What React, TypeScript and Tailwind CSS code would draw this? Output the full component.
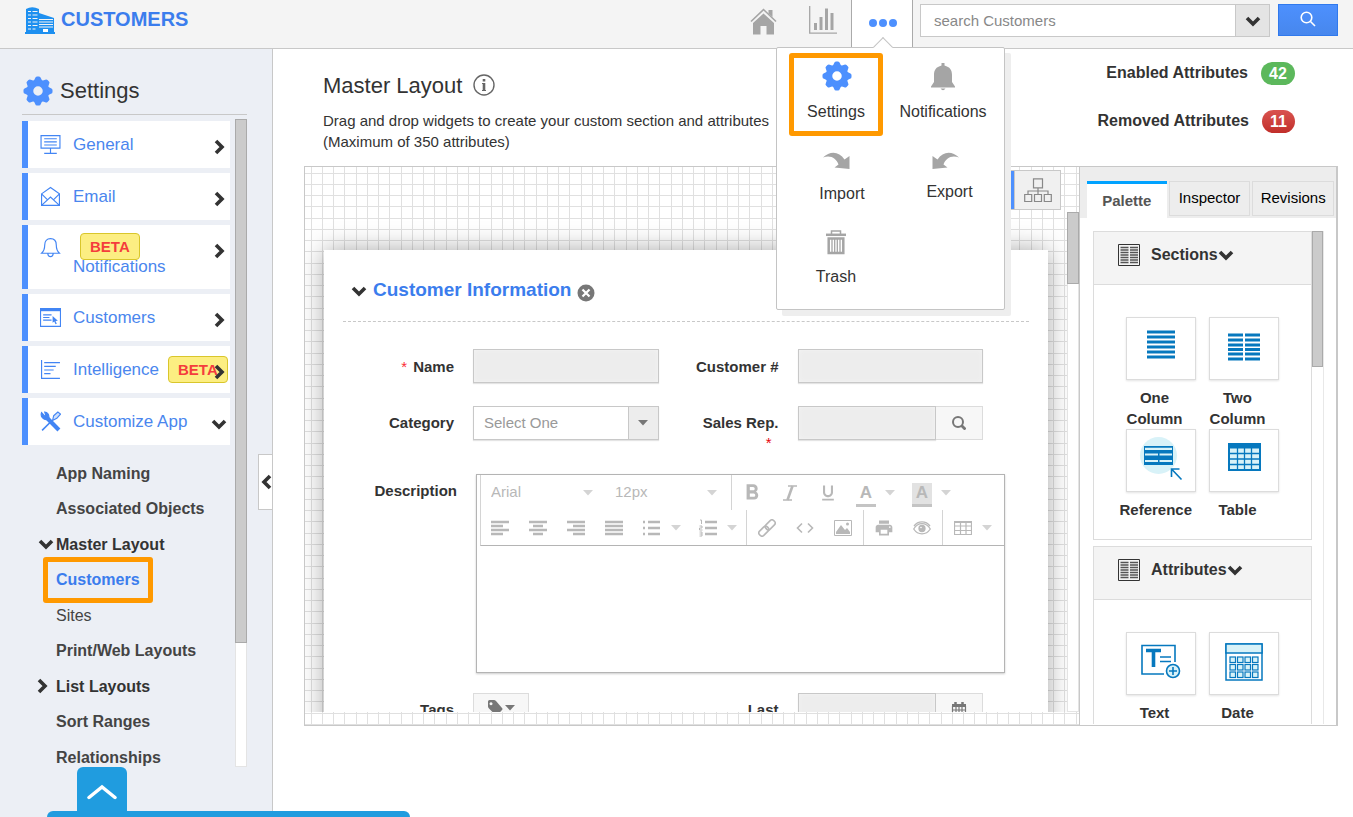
import type { ReactNode } from "react";
import { MdFormatBold, MdFormatUnderlined, MdPrint } from "react-icons/md";

function Chevron({ className = "" }: { className?: string }) {
  return (
    <svg viewBox="0 0 16 16" className={"w-4 h-4 shrink-0 " + className} fill="none" stroke="#333" strokeWidth="3.6">
      <path d="M2 5l6 6 6-6" />
    </svg>
  );
}

function Caret({ className = "" }: { className?: string }) {
  return (
    <svg viewBox="0 0 10 6" className={"w-[10px] h-[6px] pointer-events-none " + className} fill="currentColor">
      <path d="M0 0h10L5 5.500z" />
    </svg>
  );
}

function Gear() {
  return (
    <svg viewBox="-15 -15 30 30" className="w-[30px] h-[30px] shrink-0" fill="#4d90fe">
      <circle r="8" fill="none" stroke="#4d90fe" strokeWidth="6.500" />
      {[0, 45, 90, 135, 180, 225, 270, 315].map((angle) => (
        <path key={angle} d="M-4.500-9.500L-2.800-13Q-2.400-14.500-1-14.500H1Q2.400-14.500 2.800-13L4.500-9.500z" transform={`rotate(${angle})`} />
      ))}
    </svg>
  );
}

function Building() {
  return (
    <svg viewBox="0 0 30 27" className="w-[30px] h-[27px]" fill="#1e90f0">
      <path d="M0 25h30v2H0zM1 2q6-3.500 13 0v24H1z" />
      <path d="M14 6l15 5v15H14z" />
      <path d="M3 4.500h3M7.500 4.500h5M3 8h3M7.500 8h5M3 11.500h3M7.500 11.500h5M3 15h3M7.500 15h5M3 18.500h3M7.500 18.500h5M3 22h3M7.500 22h3" stroke="#f4f4f4" strokeWidth="1.200" />
      <path d="M14 12.500h14M14 15h14M14 17.500h14M14 20h14" stroke="#f4f4f4" strokeWidth="1.100" />
      <path d="M18 22h5v3h-5z" fill="#fff" />
    </svg>
  );
}

const menuIcons: Record<string, ReactNode> = {
  general: <path d="M1 1.500h18v12H1zM4 4.500h12M4 7.500h12M4 10.500h12M10 14v4M4 18.500h12" />,
  email: <path d="M1.500 7.500L10 1.500l8.500 6v11h-17zM1.500 7.500L7 13M18.500 7.500L13 13M1.500 18.500l8.500-8 8.500 8" />,
  bell: <path d="M1.500 15.500C4 13 4.500 11 4.500 7.500C4.500 4 6.500 1.500 10 1.500s5.500 2.500 5.500 6c0 3.500.5 5.500 3 8zM7.500 16c0 3.500 5 3.500 5 0" />,
  customers: (
    <>
      <path d="M.5 1.500h19v17H.5z" />
      <path d="M.5 2.500h19" strokeWidth="3" />
      <path d="M3 7.500h8M3 10h6M3 12.500h8" />
      <path d="M12 8.500l5 4.500-2.200.3 1.200 2.700-1.200.5-1.200-2.800-1.600 1.300z" fill="#4285f4" stroke="none" />
    </>
  ),
  chart: <path d="M1.500 1v17.500H19M4 3.500h15M4 7h11M4 10.500h9M4 14h6" />,
  tools: (
    <>
      <path d="M7 7l11 11" strokeWidth="4" />
      <path d="M1.500 1.500c-1.500 4 2 7.500 6 6.500l1-2C8.500 3 7 1 4.500 1L5.500 4 4.500 5z" fill="#4285f4" />
      <path d="M2 18.500l9-9" strokeWidth="1.500" />
      <path d="M13 4.500L17 1l2.500 2L16 7l-4 2z" fill="#cfe0fc" />
    </>
  ),
};

const menu = [
  { icon: "general", label: "General" },
  { icon: "email", label: "Email" },
  { icon: "bell", label: "Notifications", beta: "above" },
  { icon: "customers", label: "Customers" },
  { icon: "chart", label: "Intelligence", beta: "after" },
  { icon: "tools", label: "Customize App", open: true },
];

const subMenu = [
  { label: "App Naming" },
  { label: "Associated Objects" },
  { label: "Master Layout", tree: "open" },
  { label: "Customers", active: true },
  { label: "Sites", light: true },
  { label: "Print/Web Layouts" },
  { label: "List Layouts", tree: "closed" },
  { label: "Sort Ranges" },
  { label: "Relationships" },
];

function Beta() {
  return (
    <span className="inline-block h-[27px] rounded border border-[#d9c62b] bg-[#fcee82] px-[9px] text-[15px] leading-[25px] font-bold text-[#f43d3d]">
      BETA
    </span>
  );
}

function Sidebar() {
  return (
    <aside className="relative w-[273px] shrink-0 border-r border-[#c8c8c8] bg-[#eceff5] pt-5 pl-[22px] pr-[25px]">
      <h2 className="flex h-[46px] items-center gap-[7px] border-b border-[#c8c8c8] pl-px pb-[2px] text-[22px] text-[#333]">
        <Gear />
        Settings
      </h2>
      <div className="mt-1 flex h-[648px] gap-[5px]">
        <nav className="w-[208px] overflow-hidden pt-[2px]">
          <ul className="flex flex-col gap-[5px]">
            {menu.map((item) => (
              <li key={item.label}>
                <a
                  href="#"
                  className={
                    "relative flex border-l-6 border-[#4d90fe] bg-white pl-3 text-[17px] text-[#4a86ee] " +
                    (item.beta === "above" ? "h-[64px] items-start pt-2" : "h-[47px] items-center")
                  }
                >
                  <svg
                    viewBox="0 0 20 20"
                    className={"mr-3 h-[21px] w-[21px] shrink-0 " + (item.beta === "above" ? "mt-1" : "")}
                    fill="none"
                    stroke="#4285f4"
                    strokeWidth="1.100"
                  >
                    {menuIcons[item.icon]}
                  </svg>
                  {item.beta === "above" ? (
                    <span className="flex flex-col">
                      <span className="ml-[7px] h-[26px]">
                        <Beta />
                      </span>
                      <span className="leading-4">{item.label}</span>
                    </span>
                  ) : (
                    item.label
                  )}
                  {item.beta === "after" && (
                    <span className="ml-[9px] flex">
                      <Beta />
                    </span>
                  )}
                  <Chevron className={"absolute top-[18px] right-[3px] " + (item.open ? "" : "-rotate-90")} />
                </a>
              </li>
            ))}
          </ul>
          <ul className="mt-[11px] pl-[34px] text-base font-bold text-[#444]">
            {subMenu.map((item) => (
              <li key={item.label} className="flex h-[35px] items-center even:h-9">
                <a
                  href="#"
                  className={
                    "relative " + (item.active ? "text-[#3b7ded]" : item.light ? "font-normal" : item.tree ? "text-[#333]" : "")
                  }
                >
                  {item.tree && (
                    <Chevron className={"absolute " + (item.tree === "open" ? "top-[3px] -left-[18px]" : "top-[3px] -left-[22px] -rotate-90")} />
                  )}
                  {item.label}
                  {item.active && (
                    <span className="absolute -inset-x-[13px] -inset-y-[11px] rounded-[3px] border-5 border-[#ff9900]" />
                  )}
                </a>
              </li>
            ))}
          </ul>
        </nav>
        <div className="w-3 border border-[#e4e4e4] bg-white">
          <div className="-mx-px -mt-px h-[524px] border border-[#aaa] bg-[#cbcbcb]" />
        </div>
      </div>
      <button
        aria-label="Collapse sidebar"
        className="absolute top-[405px] right-0 flex h-14 w-[14px] items-center border border-r-0 border-[#c8c8c8] bg-white"
      >
        <Chevron className="rotate-90" />
      </button>
    </aside>
  );
}

function ArrowIcon({ flip }: { flip?: boolean }) {
  return (
    <svg viewBox="0 0 27 18" className={"h-[18px] w-[27px] " + (flip ? "-scale-x-100" : "")} fill="#a5a5a5">
      <path d="M0 5.500C7-1.500 16-1 21.500 7.500L26.500 4v13L11.500 15.500l4-3C13.500 6 7 2.500 0 5.500z" />
    </svg>
  );
}

function MoreMenu() {
  return (
    <div className="absolute top-[47px] -left-[76px] z-20 h-[263px] w-[229px] rounded-[2px] border border-[#c4c4c4] bg-white shadow-[6px_6px_0_#eeeeee]">
      <span className="absolute -top-[8px] left-[99px] h-[14px] w-[14px] rotate-45 border-t border-l border-[#c4c4c4] bg-white" />
      <ul className="relative grid grid-cols-[94px_94px] gap-x-[13px] pt-[5px] pl-3 text-base text-[#333]">
        <li className="h-[99px]">
          <a href="#" className="flex h-[83px] flex-col items-center gap-[11px] rounded-[3px] border-5 border-[#ff9900] pt-[3px]">
            <span className="pl-[2px]">
              <Gear />
            </span>
            <span className="leading-5">Settings</span>
          </a>
        </li>
        <li>
          <a href="#" className="flex flex-col items-center gap-[11px] pt-[10px]">
            <svg viewBox="0 0 24 28" className="h-7 w-6" fill="#a5a5a5">
              <path d="M10.500 0h3v2.500C19 4 21 7 21 12v7l3 4.500v1H0v-1L3 19v-7C3 7 5 4 10.500 2.500zM9.500 25.500h5q-2.500 3.500-5 0z" />
            </svg>
            <span className="leading-5">Notifications</span>
          </a>
        </li>
        <li className="h-[78px]">
          <a href="#" className="flex flex-col items-center gap-[14px]">
            <ArrowIcon />
            <span className="pl-3 leading-5">Import</span>
          </a>
        </li>
        <li>
          <a href="#" className="flex flex-col items-center gap-3 pl-[5px]">
            <ArrowIcon flip />
            <span className="pl-2 leading-5">Export</span>
          </a>
        </li>
        <li>
          <a href="#" className="flex flex-col items-center gap-3">
            <svg viewBox="0 0 20 25" className="h-[25px] w-5" fill="none" stroke="#a5a5a5">
              <path d="M5.500 4V1h9v3" strokeWidth="1.500" />
              <path d="M0 4.800h20" strokeWidth="2.500" />
              <path d="M2.700 8.500h14.600v14.500H2.700z" strokeWidth="2.500" />
              <path d="M6 9v14M8.700 9v14M11.300 9v14M14 9v14" strokeWidth="1.300" />
            </svg>
            <span className="leading-5">Trash</span>
          </a>
        </li>
      </ul>
    </div>
  );
}

function Header() {
  return (
    <header className="flex h-[49px] justify-between border-b border-[#c8c8c8] bg-[#f4f4f4] pr-[15px] pl-[25px]">
      <h1 className="flex h-[40px] items-center gap-[6px] text-xl font-bold text-[#3b7ded]">
        <Building />
        <span className="-mt-[2px]">CUSTOMERS</span>
      </h1>
      <div className="flex">
        <button aria-label="Home" className="mt-2 mr-8 h-[27px]">
          <svg viewBox="0 0 27 27" className="h-[27px] w-[27px]" fill="#a5a5a5">
            <path d="M13.500 5.500L24 15v11.500h-7.500V18h-6v8.500H3V15z" />
            <path d="M1 13.500L13.500 1.500 26 13.500" fill="none" stroke="#a5a5a5" strokeWidth="1.600" />
            <path d="M18.500 2h4v7l-4-3.500z" />
          </svg>
        </button>
        <button aria-label="Reports" className="mt-[6px] mr-[14px] h-[28px]">
          <svg viewBox="0 0 28 28" className="h-7 w-7" fill="none" stroke="#a5a5a5">
            <path d="M.7 0v27.200H28" strokeWidth="1.300" />
            <path d="M6.500 17v7M12 11v13M17.500 2.500V24M23 7v17" strokeWidth="3" />
          </svg>
        </button>
        <div className="relative h-[48px] w-[62px] border-x border-[#aaa] bg-white">
          <button aria-label="More" className="flex h-[45px] w-full items-center justify-center gap-[2px] pl-[2px]">
            <span className="h-2 w-2 rounded-full bg-[#4d90fe]" />
            <span className="h-2 w-2 rounded-full bg-[#4d90fe]" />
            <span className="h-2 w-2 rounded-full bg-[#4d90fe]" />
          </button>
          <MoreMenu />
        </div>
        <form className="mt-1 ml-[7px] flex">
          <input
            type="text"
            aria-label="Search"
            placeholder="search Customers"
            className="h-[33px] w-[316px] border border-[#c8c8c8] bg-white px-[13px] text-[15px] placeholder:text-[#888]"
          />
          <button type="button" aria-label="Search options" className="flex h-[33px] w-[34px] items-center justify-center border border-l-0 border-[#c8c8c8] bg-[#e4e4e4]">
            <Chevron />
          </button>
          <button type="submit" aria-label="Run search" className="ml-2 flex h-8 w-[60px] items-center justify-center border border-[#3079ed] bg-linear-to-b from-[#4d90fe] to-[#4787ed] pb-[2px]">
            <svg viewBox="0 0 16 16" className="h-4 w-4" fill="none" stroke="#fff" strokeWidth="1.600">
              <circle cx="6.500" cy="6.500" r="5.300" />
              <path d="M10.500 10.500l4.500 4.500" />
            </svg>
          </button>
        </form>
      </div>
    </header>
  );
}

const labelClass = "text-right text-[15px] leading-5 font-bold text-[#333]";
const fieldClass = "h-[34px] min-w-0 border border-[#c8c8c8] bg-[#ededed] shadow-[inset_0_0_4px_#f4f4f4,0_1px_1px_#e4e4e4]";

function Tool({ label, caret, children }: { label: string; caret?: boolean; children: ReactNode }) {
  return (
    <>
      <button type="button" aria-label={label} className="flex h-full w-[38px] items-center justify-center">
        {children}
      </button>
      {caret && (
        <button type="button" aria-label={label + " options"} className="flex h-full w-[18px] items-center text-[#d4d4d4]">
          <Caret />
        </button>
      )}
    </>
  );
}

function Sep() {
  return <span className="mx-px h-full w-px bg-[#d4d4d4]" />;
}

function Bars({ d, w = "2.4" }: { d: string; w?: string }) {
  return (
    <svg viewBox="0 0 18 16" className="h-4 w-[18px]" fill="none" stroke="#b8b8b8" strokeWidth={w}>
      <path d={d} />
    </svg>
  );
}

function Editor() {
  return (
    <div className="h-[199px] border border-[#b4b4b4] bg-white shadow-[0_1px_2px_#ccc]">
      <div className="ml-[3px] border-b border-l border-[#b4b4b4] border-l-[#d4d4d4] text-[#b8b8b8]">
        <div className="flex h-[35px]">
          <div className="relative w-[125px]">
            <select aria-label="Font" className="h-full w-full appearance-none pl-[10px] text-[15px]">
              <option>Arial</option>
            </select>
            <Caret className="absolute top-[15px] right-[13px] text-[#d4d4d4]" />
          </div>
          <div className="relative w-[124px]">
            <select aria-label="Font size" className="h-full w-full appearance-none pl-[9px] text-[15px]">
              <option>12px</option>
            </select>
            <Caret className="absolute top-[15px] right-[13px] text-[#d4d4d4]" />
          </div>
          <Sep />
          <Tool label="Bold">
            <MdFormatBold className="h-[26px] w-[26px]" />
          </Tool>
          <Tool label="Italic">
            <svg viewBox="0 0 14 16" className="h-4 w-[14px]" fill="none" stroke="#b8b8b8">
              <path d="M5 1h9M0 15h9" strokeWidth="1.600" />
              <path d="M9.500 1l-5 14" strokeWidth="2.600" />
            </svg>
          </Tool>
          <Tool label="Underline">
            <MdFormatUnderlined className="h-5 w-5" />
          </Tool>
          <Tool label="Text color" caret>
            <span className="mt-1 flex h-6 w-5 justify-center border-b-3 border-[#c4c4c4] text-[17px] leading-5 font-bold">A</span>
          </Tool>
          <Tool label="Highlight" caret>
            <span className="mt-1 flex h-6 w-5 justify-center border-b-3 border-[#c4c4c4] bg-[#e2e2e2] text-[17px] leading-5 font-bold">A</span>
          </Tool>
        </div>
        <div className="flex h-[35px]">
          <Tool label="Align left">
            <Bars d="M0 2h18M0 6h12M0 10h18M0 14h12" />
          </Tool>
          <Tool label="Align center">
            <Bars d="M0 2h18M4 6h10M0 10h18M4 14h10" />
          </Tool>
          <Tool label="Align right">
            <Bars d="M0 2h18M6 6h12M0 10h18M6 14h12" />
          </Tool>
          <Tool label="Justify">
            <Bars d="M0 2h18M0 6h18M0 10h18M0 14h18" />
          </Tool>
          <Tool label="Bullet list" caret>
            <Bars d="M0 2h2M5 2h12M0 8h2M5 8h12M0 14h2M5 14h12" />
          </Tool>
          <Tool label="Numbered list" caret>
            <svg viewBox="0 0 18 18" className="h-[18px] w-[18px]" fill="none" stroke="#b8b8b8">
              <path d="M6 3h12M6 9h12M6 15h12" strokeWidth="2.400" />
              <path d="M1 1h1.500v4M.5 7h2.500v2H.500v2h3M.5 13h2.500v4H.500M.5 15h2.500" />
            </svg>
          </Tool>
          <Sep />
          <Tool label="Link">
            <svg viewBox="0 0 18 18" className="h-[18px] w-[18px]" fill="none" stroke="#b8b8b8" strokeWidth="1.600">
              <g transform="rotate(-45 9 9)">
                <rect x="-1" y="6" width="11" height="6" rx="2.500" />
                <rect x="8" y="6" width="11" height="6" rx="2.500" />
              </g>
            </svg>
          </Tool>
          <Tool label="View HTML">
            <Bars d="M6 3.500L1.500 8 6 12.500M12 3.500l4.500 4.500L12 12.500" w="1.600" />
          </Tool>
          <Tool label="Image">
            <svg viewBox="0 0 18 16" className="h-4 w-[18px]" fill="#b8b8b8">
              <path d="M.5 .5h17v15H.5z" fill="none" stroke="#b8b8b8" />
              <path d="M2 14V12l5-7 4 5 2-2 3 4v2z" />
              <circle cx="13.500" cy="4" r="1.500" />
            </svg>
          </Tool>
          <Sep />
          <Tool label="Print">
            <MdPrint className="h-5 w-5" />
          </Tool>
          <Tool label="Preview">
            <svg viewBox="0 0 18 14" className="h-[14px] w-[18px]" fill="none" stroke="#b8b8b8" strokeWidth="1.300">
              <path d="M.7 8C5 .8 13 .8 17.300 8 13 14.500 5 14.500.7 8zM1 5C5-.5 13-.5 17 5" />
              <circle cx="9" cy="7.500" r="3" fill="#b8b8b8" />
              <circle cx="8" cy="6.500" r=".8" fill="#fff" stroke="none" />
            </svg>
          </Tool>
          <Sep />
          <Tool label="Table" caret>
            <Bars d="M.5 1.500h17v13H.500zM.5 6h17M.5 10.500h17M6.500 1v13M12 1v13M.5 2.500h17" w="1.200" />
          </Tool>
        </div>
      </div>
      <textarea aria-label="Description" className="block h-[124px] w-full resize-none p-2" />
    </div>
  );
}

const fieldGrid = "grid grid-cols-[111px_minmax(0,1fr)_101px_minmax(0,1fr)] items-start gap-x-[19px] pr-[46px] ";

function CustomerForm() {
  return (
    <section className="mx-[19px] mt-[38px] h-[560px] bg-white px-[19px] pt-[26px] shadow-[0_0_24px_rgba(0,0,0,0.35)]">
      <h3 className="flex h-[46px] items-start gap-[6px] border-b border-dashed border-[#c8c8c8] text-[19px] leading-7 font-bold text-[#3b7ded]">
        <Chevron className="mt-[7px] ml-2" />
        Customer Information
        <button aria-label="Remove section" className="mt-2 flex">
          <svg viewBox="0 0 18 18" className="h-[18px] w-[18px]">
            <circle cx="9" cy="9" r="8.500" fill="#777" />
            <path d="M5.500 5.500l7 7M12.500 5.500l-7 7" stroke="#fff" strokeWidth="2.200" />
          </svg>
        </button>
      </h3>
      <form>
        <div className={fieldGrid + "gap-y-[23px] pt-[27px]"}>
          <label htmlFor="name" className={labelClass + " pt-2"}>
            <span className="mr-[6px] font-normal text-red-500">*</span>Name
          </label>
          <input id="name" type="text" className={fieldClass} />
          <label htmlFor="number" className={labelClass + " pt-2"}>
            Customer #
          </label>
          <input id="number" type="text" className={fieldClass} />
          <label htmlFor="category" className={labelClass + " pt-[7px]"}>
            Category
          </label>
          <div className="relative h-[34px]">
            <select id="category" className="h-full w-full appearance-none border border-[#c8c8c8] bg-white pl-[10px] text-[15px] text-[#999] shadow-[0_1px_1px_#e4e4e4]">
              <option>Select One</option>
            </select>
            <span className="pointer-events-none absolute inset-y-px right-px flex w-[30px] items-center justify-center border-l border-[#c8c8c8] bg-[#ededed] text-[#777]">
              <Caret />
            </span>
          </div>
          <label htmlFor="rep" className={labelClass + " h-[34px] pt-[7px]"}>
            Sales Rep.
            <span className="block pr-[7px] font-normal text-red-600">*</span>
          </label>
          <div className="flex">
            <input id="rep" type="text" className={fieldClass + " flex-1"} />
            <button type="button" aria-label="Find sales rep" className="flex h-[34px] w-[47px] items-center justify-center border border-l-0 border-[#dcdcdc] bg-[#f7f7f7]">
              <svg viewBox="0 0 14 14" className="h-[14px] w-[14px]" fill="none" stroke="#777" strokeWidth="2">
                <circle cx="6" cy="6" r="5" />
                <path d="M9.500 9.500l4 4" strokeWidth="2.800" />
              </svg>
            </button>
          </div>
        </div>
        <div className="grid grid-cols-[114px_minmax(0,1fr)] gap-x-[19px] pt-[34px] pr-6">
          <span className={labelClass + " pt-[7px]"}>Description</span>
          <Editor />
        </div>
        <div className={fieldGrid + "pt-[20px]"}>
          <span className={labelClass + " pt-[7px]"}>Tags</span>
          <button type="button" aria-label="Tags" className="flex h-[34px] w-14 items-center justify-center gap-[2px] border border-[#dcdcdc] bg-[#f7f7f7] pb-[4px] text-[#777]">
            <svg viewBox="0 0 16 16" className="h-4 w-4" fill="currentColor" fillRule="evenodd">
              <path d="M1 1.500Q1 0 2.500 0H7Q8 0 9 1l6 7q1 1 0 2l-4.500 5q-1 1-2 0L2 8.500Q1 7.500 1 6.500zM4 2.200a1.500 1.500 0 1 0 .01 0z" />
            </svg>
            <Caret />
          </button>
          <label htmlFor="last" className={labelClass + " pt-[7px]"}>
            Last
          </label>
          <div className="flex">
            <input id="last" type="text" className={fieldClass + " flex-1"} />
            <button type="button" aria-label="Pick date" className="flex h-[34px] w-[47px] items-center justify-center border border-l-0 border-[#dcdcdc] bg-[#f7f7f7]">
              <svg viewBox="0 0 16 16" className="h-4 w-4" fill="none" stroke="#777">
                <path d="M1 3.500h14" strokeWidth="3" />
                <path d="M4.500 0v4M11.500 0v4" strokeWidth="2.500" />
                <path d="M1.500 4v11h13V4M1 8h14M1 11.500h14M5 5v10M8 5v10M11 5v10" strokeWidth="1.200" />
              </svg>
            </button>
          </div>
        </div>
      </form>
    </section>
  );
}

function Tile({ label, children }: { label: string; children: ReactNode }) {
  return (
    <button className="flex flex-col items-center gap-[7px]">
      <span className="flex h-[63px] w-[70px] items-center justify-center self-end border border-[#dcdcdc] bg-white shadow-[0_1px_2px_#e4e4e4]">
        {children}
      </span>
      <span className="w-[70px] text-center text-[15px] leading-[21px] font-bold text-[#333]">{label}</span>
    </button>
  );
}

function PaletteGroup({ title, children }: { title: string; children: ReactNode }) {
  return (
    <section className="mb-[6px] border border-[#dcdcdc] bg-white">
      <h3 className="flex h-[53px] items-center border-b border-[#dcdcdc] bg-[#f4f4f4] pb-[6px] pl-6 text-base font-bold text-[#333]">
        <svg viewBox="0 0 22 22" className="mr-[11px] h-[22px] w-[22px]" fill="none" stroke="#333">
          <path d="M.5 .5h21v21H.5z" />
          <path d="M2.500 3.500h8M2.500 6h8M2.500 8.500h8M2.500 11h8M2.500 13.500h8M2.500 16h8M2.500 18.500h8M12 3.500h8M12 6h8M12 8.500h8M12 11h8M12 13.500h8M12 16h8M12 18.500h8" strokeWidth="1.300" stroke="#555" />
        </svg>
        {title}
        <Chevron />
      </h3>
      <div className="grid grid-cols-[83px_83px] px-[19px] pt-8 pb-[19px]">{children}</div>
    </section>
  );
}

function Palette() {
  return (
    <div className="relative z-10 w-[258px] shrink-0 border-x border-[#c8c8c8] bg-white">
      <div className="flex gap-[2px] bg-[#ededed] pt-[14px] pr-[2px] pl-[7px] text-[15px] text-black" role="tablist">
        <button role="tab" aria-selected="true" className="h-[37px] flex-1 border-t-3 border-[#00a2ff] bg-white font-bold text-[#555]">
          Palette
        </button>
        <button role="tab" aria-selected="false" className="h-[35px] flex-1 border border-[#dcdcdc]">
          Inspector
        </button>
        <button role="tab" aria-selected="false" className="h-[35px] flex-1 border border-[#dcdcdc]">
          Revisions
        </button>
      </div>
      <div className="flex h-[506px] overflow-hidden pt-[13px] pl-[13px]">
        <div className="w-[219px]">
          <PaletteGroup title="Sections">
            <Tile label="One Column">
              <svg viewBox="0 0 28 30" className="mb-2 h-[30px] w-7" stroke="#0678be" strokeWidth="3">
                <path d="M0 2h28M0 7h28M0 12h28M0 17h28M0 22h28M0 27h28" />
              </svg>
            </Tile>
            <Tile label="Two Column">
              <svg viewBox="0 0 32 28" className="mb-1 h-7 w-8" stroke="#0678be" strokeWidth="2.800">
                <path d="M0 2h15M0 7h15M0 12h15M0 16.500h15M0 21h15M0 26h15M17 2h15M17 7h15M17 12h15M17 16.500h15M17 21h15M17 26h15" />
              </svg>
            </Tile>
            <Tile label="Reference">
              <svg viewBox="0 0 44 46" className="mb-1 h-[46px] w-11" fill="none" stroke="#0678be">
                <circle cx="19.500" cy="19.500" r="18.500" fill="#d8f2f8" stroke="none" />
                <path d="M5 10h29v19H5z" fill="#0678be" stroke="none" />
                <path d="M6 12.800h27M6 18.500h13M20.500 18.500H33M6 25h13M20.500 25H33" stroke="#d8f2f8" strokeWidth="2.200" />
                <path d="M42.500 43.500L32.500 33M32.500 41v-8h8" strokeWidth="1.600" />
              </svg>
            </Tile>
            <Tile label="Table">
              <svg viewBox="0 0 33 28" className="mb-2 h-7 w-[33px]" fill="none" stroke="#0678be">
                <path d="M1 1h31v26H1z" strokeWidth="2" fill="#d8f2f8" />
                <path d="M1 3h31" strokeWidth="5" />
                <path d="M2 10.500h29M2 16h29M2 21.500h29M9.500 5v22M16.500 5v22M23.500 5v22" strokeWidth="1.300" />
              </svg>
            </Tile>
          </PaletteGroup>
          <PaletteGroup title="Attributes">
            <Tile label="Text">
              <svg viewBox="0 0 40 35" className="mb-1 h-[35px] w-10" fill="none" stroke="#0678be" strokeWidth="1.600">
                <path d="M34 18V1.500H1V30h22" />
                <path d="M5 6.500h15M12.500 6v17" strokeWidth="3.600" />
                <path d="M19 13h11M19 17.500h11" />
                <circle cx="32" cy="27" r="6.500" fill="#d8f2f8" />
                <path d="M32 23v8M28 27h8" />
              </svg>
            </Tile>
            <Tile label="Date">
              <svg viewBox="0 0 38 38" className="mb-1 h-[38px] w-[38px]" fill="none" stroke="#0678be" strokeWidth="1.500">
                <path d="M1 1h36v36H1z" />
                <path d="M1 1h36v9H1z" fill="#d8f2f8" />
                {[14, 21.5, 29].map((y) =>
                  [5, 12.5, 20, 27.5].map((x) => (
                    <rect key={x + "-" + y} x={x} y={y} width="5.500" height="5.500" fill="#d8f2f8" strokeWidth="1.200" />
                  ))
                )}
              </svg>
            </Tile>
          </PaletteGroup>
        </div>
        <div className="w-3 border-r border-[#e8e8e8]">
          <div className="h-[136px] border border-[#aaa] bg-[#cbcbcb]" />
        </div>
      </div>
    </div>
  );
}

// four grid cells make one 45px tile
const gridLines =
  "bg-[linear-gradient(90deg,transparent_6px,#e0e0e0_6px_7px,transparent_7px_17px,#e0e0e0_17px_18px,transparent_18px_28px,#e0e0e0_28px_29px,transparent_29px_39px,#e0e0e0_39px_40px,transparent_40px),linear-gradient(transparent_6px,#e0e0e0_6px_7px,transparent_7px_17px,#e0e0e0_17px_18px,transparent_18px_28px,#e0e0e0_28px_29px,transparent_29px_39px,#e0e0e0_39px_40px,transparent_40px)] bg-size-[45px_45px]";

function Canvas() {
  return (
    <div className={"mt-[14px] mr-[15px] ml-[31px] flex border border-[#c8c8c8] " + gridLines}>
      <div className="min-w-0 flex-1 pb-[13px]">
        <div className="flex h-[45px] justify-end pt-[3px] pr-[18px]">
          <button aria-label="Form view" className="flex h-10 w-12 items-center justify-center border border-r-0 border-[#c8c8c8] bg-[#4d90fe]">
            <span className="h-[22px] w-8 rounded border-2 border-white" />
          </button>
          <button aria-label="Tree view" className="flex h-10 w-[47px] items-center justify-center border border-[#c8c8c8] bg-[#f0f0f0]">
            <svg viewBox="0 0 28 24" className="h-6 w-7" fill="none" stroke="#888" strokeWidth="1.200">
              <path d="M9.500 .8h9v9h-9zM.7 16.500h7v7h-7zM10.500 16.500h7v7h-7zM20.300 16.500h7v7h-7zM14 10v6.500M4 16.500V13h20v3.500" />
            </svg>
          </button>
        </div>
        <div className="flex h-[500px]">
          <div className="min-w-0 flex-1 overflow-hidden">
            <CustomerForm />
          </div>
          <div className="w-3 border border-[#e4e4e4] bg-white">
            <div className="-mx-px -mt-px h-[72px] border border-[#aaa] bg-[#cbcbcb]" />
          </div>
        </div>
      </div>
      <Palette />
    </div>
  );
}

export default function App() {
  return (
    <div className="flex min-h-screen flex-col bg-white font-['Liberation_Sans',Arial,sans-serif]">
      <Header />
      <div className="flex flex-1">
        <Sidebar />
        <main className="min-w-0 flex-1">
          <div className="flex justify-between pr-[58px] pl-[50px]">
            <div className="pt-[21px] text-[#333]">
              <h2 className="flex h-[30px] items-center gap-[11px] text-[22px]">
                Master Layout
                <svg viewBox="0 0 22 22" className="h-[22px] w-[22px]" fill="none" stroke="#666">
                  <circle cx="11" cy="11" r="10" strokeWidth="1.400" />
                  <path d="M11 5v2.500M11 9v8" strokeWidth="2.600" />
                  <path d="M9 9.500h2M9 16.500h4" strokeWidth="1" />
                </svg>
              </h2>
              <p className="mt-[10px] text-[15px] leading-[21px]">
                Drag and drop widgets to create your custom section and attributes
                <br />
                (Maximum of 350 attributes)
              </p>
            </div>
            <div className="flex flex-col items-end gap-6 pt-3 font-bold text-[#333]">
              <p className="flex h-6 items-center gap-[13px]">
                Enabled Attributes
                <span className="h-[23px] w-[34px] rounded-full bg-[#5cb85c] text-center leading-[23px] text-white">42</span>
              </p>
              <p className="flex h-6 items-center gap-[13px]">
                Removed Attributes
                <span className="h-[23px] w-[33px] rounded-full bg-linear-to-b from-[#d9534f] to-[#c12e2a] text-center leading-[23px] text-white">11</span>
              </p>
            </div>
          </div>
          <Canvas />
        </main>
      </div>
      <div className="fixed bottom-0 left-[47px] z-30 w-[363px]">
        <button aria-label="Open panel" className="ml-[30px] flex h-11 w-[50px] items-center justify-center rounded-t-md bg-[#209cdf]">
          <svg viewBox="0 0 30 16" className="mt-[6px] h-4 w-[30px]" fill="none" stroke="#fff" strokeWidth="3.500" strokeLinecap="round">
            <path d="M2 13.500L15 3l13 10.500" />
          </svg>
        </button>
        <div className="h-[6px] rounded-t-md bg-[#209cdf]" />
      </div>
    </div>
  );
}
